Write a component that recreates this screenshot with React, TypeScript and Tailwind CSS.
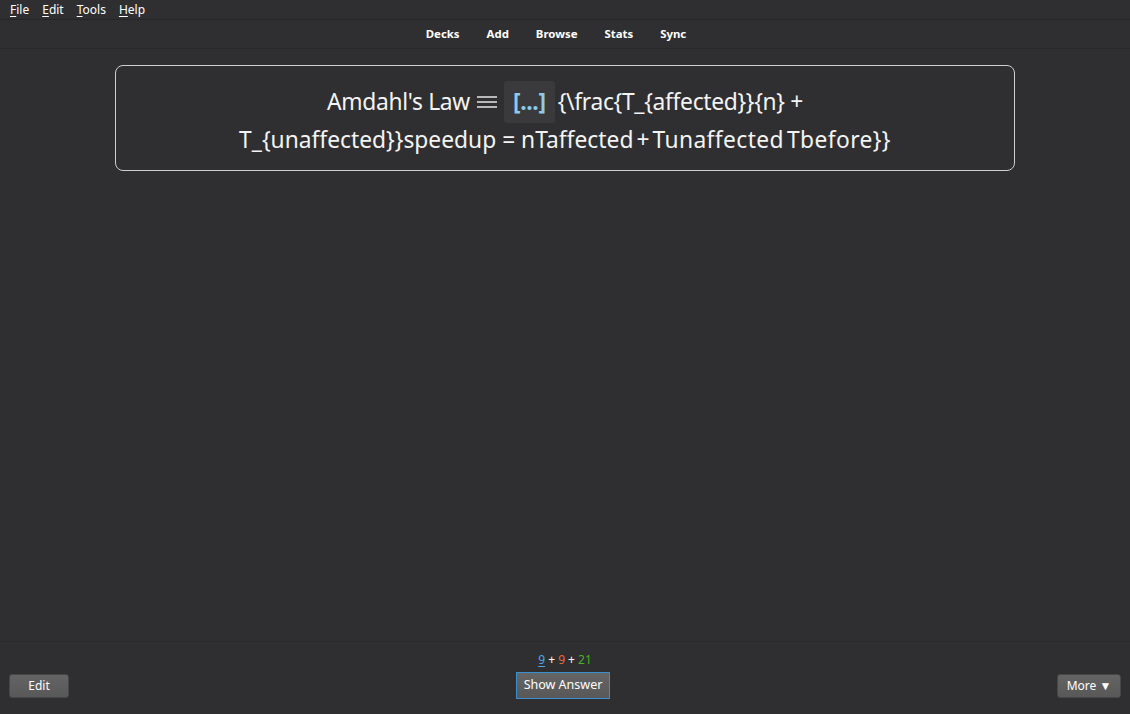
import React from "react";

const ui = { fontFamily: '"Noto Sans", "Open Sans", sans-serif' };
const cardFont = { fontFamily: '"Noto Sans", "Open Sans", sans-serif' };

const menus = [
  { key: "F", rest: "ile" },
  { key: "E", rest: "dit" },
  { key: "T", rest: "ools" },
  { key: "H", rest: "elp" },
];

const tabs = ["Decks", "Add", "Browse", "Stats", "Sync"];

const App = () => {
  return (
    <div className="flex flex-col h-[714px] w-full bg-[#2f2f31] text-white overflow-hidden" style={ui}>
      {/* menu bar */}
      <div className="flex items-center h-[20px] pt-[1px] px-[7px] gap-[7px] text-[12px] border-b border-[#262628]">
        {menus.map((m) => (
          <span key={m.key} className="px-[3px]">
            <span className="underline underline-offset-2">{m.key}</span>
            {m.rest}
          </span>
        ))}
      </div>

      {/* toolbar */}
      <div className="flex justify-center items-center h-[29px] pr-[18px] gap-[27px] text-[11.4px] font-bold border-b border-[#29292b]">
        {tabs.map((t) => (
          <span key={t}>{t}</span>
        ))}
      </div>

      {/* card */}
      <div className="flex-1 px-[115px] pt-[16px]">
        <div
          className="border border-[#cfcfcf] rounded-[8px] h-[106px] pt-[5px] flex flex-col items-center justify-center text-[22.8px] leading-[38px] text-[#f4f4f4]"
          style={cardFont}
        >
          <div className="flex items-center h-[38px] tracking-[-0.3px]">
            <span>Amdahl's Law</span>
            <svg className="ml-[7px]" width="20" height="14" viewBox="0 0 20 14">
              <line x1="0" y1="2" x2="20" y2="2" stroke="#f4f4f4" strokeWidth="1.4" />
              <line x1="0" y1="7" x2="20" y2="7" stroke="#f4f4f4" strokeWidth="1.4" />
              <line x1="0" y1="12" x2="20" y2="12" stroke="#f4f4f4" strokeWidth="1.4" />
            </svg>
            <span className="ml-[7px] bg-[#3a3a3c] rounded-[3px] px-[9px] h-[42px] flex items-center text-[#8ccbe9] font-bold">
              [...]
            </span>
            <span className="ml-[3px]">{"{\\frac{T_{affected}}{n} +"}</span>
          </div>
          <div className="flex items-center h-[38px]">
            <span>{"T_{unaffected}}speedup = nTaffected"}</span>
            <span className="mx-[3px]">+</span>
            <span className="tracking-[0.4px]">Tunaffected</span>
            <span className="ml-[3px] tracking-[0.4px]">{"Tbefore}}"}</span>
          </div>
        </div>
      </div>

      {/* bottom bar */}
      <div className="h-[73px] border-t border-[#29292b] relative flex flex-col items-center pt-[9px]">
        <div className="text-[12px] leading-[17px]">
          <span className="text-[#4ba6f0] underline underline-offset-2">9</span>
          <span className="text-white"> + </span>
          <span className="text-[#e8673d]">9</span>
          <span className="text-white"> + </span>
          <span className="text-[#45b51d]">21</span>
        </div>
        <div className="w-full flex items-center justify-between px-[9px] mt-[4px]">
          <button className="w-[60px] h-[24px] text-[12px] rounded-[3px] border border-[#474747] bg-gradient-to-b from-[#646464] to-[#585858] text-white">
            Edit
          </button>
          <button className="w-[94px] h-[27px] text-[12.5px] border border-[#3a8fd0] bg-gradient-to-b from-[#656565] to-[#585858] text-white">
            Show Answer
          </button>
          <button className="w-[64px] h-[24px] text-[12px] rounded-[3px] border border-[#474747] bg-gradient-to-b from-[#646464] to-[#585858] text-white">
            More ▼
          </button>
        </div>
      </div>
    </div>
  );
};

export default App;
